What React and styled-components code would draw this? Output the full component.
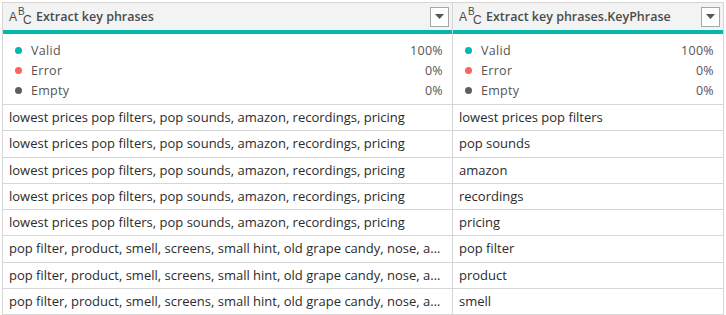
import React from 'react'
import styled, { createGlobalStyle } from 'styled-components'

const GlobalStyle = createGlobalStyle`
  html, body {
    margin: 0;
    padding: 0;
    background: #ffffff;
  }
  body {
    font-family: 'Open Sans', 'Noto Sans', sans-serif;
  }
`

const columns = [
  {
    title: 'Extract key phrases',
    width: 450,
    values: [
      'lowest prices pop filters, pop sounds, amazon, recordings, pricing',
      'lowest prices pop filters, pop sounds, amazon, recordings, pricing',
      'lowest prices pop filters, pop sounds, amazon, recordings, pricing',
      'lowest prices pop filters, pop sounds, amazon, recordings, pricing',
      'lowest prices pop filters, pop sounds, amazon, recordings, pricing',
      'pop filter, product, smell, screens, small hint, old grape candy, nose, and a plastic taste',
      'pop filter, product, smell, screens, small hint, old grape candy, nose, and a plastic taste',
      'pop filter, product, smell, screens, small hint, old grape candy, nose, and a plastic taste',
    ],
  },
  {
    title: 'Extract key phrases.KeyPhrase',
    width: 271,
    values: ['lowest prices pop filters', 'pop sounds', 'amazon', 'recordings', 'pricing', 'pop filter', 'product', 'smell'],
  },
]

const stats = [
  { label: 'Valid', color: '#01b8aa', value: '100%' },
  { label: 'Error', color: '#fd625e', value: '0%' },
  { label: 'Empty', color: '#5f5f5f', value: '0%' },
]

const App = () => {
  return (
    <>
      <GlobalStyle />
      <Wrapper>
        <Table>
          {columns.map(col => (
            <Column key={col.title} width={col.width}>
              <Header>
                <TypeIcon>
                  A<Sup>B</Sup><Sub>C</Sub>
                </TypeIcon>
                <HeaderTitle>{col.title}</HeaderTitle>
                <Dropdown>
                  <svg width="9" height="5" viewBox="0 0 9 5">
                    <path d="M0 0 L9 0 L4.5 5 Z" fill="#555" />
                  </svg>
                </Dropdown>
              </Header>
              <Stats>
                {stats.map(s => (
                  <StatRow key={s.label}>
                    <Dot color={s.color} />
                    <StatLabel>{s.label}</StatLabel>
                    <StatValue>{s.value}</StatValue>
                  </StatRow>
                ))}
              </Stats>
              {col.values.map((v, i) => (
                <Cell key={i}>{v}</Cell>
              ))}
            </Column>
          ))}
        </Table>
      </Wrapper>
    </>
  )
}

export default App

const Wrapper = styled.div`
  padding: 2px 0 0 2px;
  width: 726px;
  height: 315px;
  box-sizing: border-box;
  overflow: hidden;
`

const Table = styled.div`
  display: flex;
  border-left: 1px solid #d6d6d6;
  border-top: 1px solid #d6d6d6;
  width: max-content;
`

const Column = styled.div`
  display: flex;
  flex-direction: column;
  width: ${p => p.width}px;
  box-sizing: border-box;
  border-right: 1px solid #d6d6d6;
`

const Header = styled.div`
  display: flex;
  align-items: center;
  height: 27px;
  background: #f3f3f3;
  border-bottom: 4px solid #01b8aa;
  padding: 0 3px 0 4px;
  box-sizing: content-box;
`

const TypeIcon = styled.div`
  position: relative;
  width: 24px;
  height: 20px;
  font-family: 'Liberation Sans', sans-serif;
  font-size: 12px;
  color: #4a4a4a;
  line-height: 20px;
  padding-left: 2px;
  flex-shrink: 0;
`

const Sup = styled.span`
  position: absolute;
  left: 11px;
  top: -5px;
  font-size: 10px;
`

const Sub = styled.span`
  position: absolute;
  left: 16px;
  top: 3px;
  font-size: 12px;
`

const HeaderTitle = styled.div`
  flex: 1;
  margin-left: 3px;
  font-size: 12.5px;
  font-weight: 600;
  color: #4b4b4b;
  white-space: nowrap;
  overflow: hidden;
`

const Dropdown = styled.div`
  width: 17px;
  height: 18px;
  border: 1px solid #a6a6a6;
  background: #ffffff;
  display: grid;
  place-items: center;
  flex-shrink: 0;
`

const Stats = styled.div`
  height: 71px;
  padding: 6px 9px 0 11px;
  box-sizing: border-box;
  border-bottom: 1px solid #d6d6d6;
`

const StatRow = styled.div`
  display: flex;
  align-items: center;
  height: 20px;
  font-size: 12.5px;
  color: #555555;
`

const Dot = styled.span`
  width: 7px;
  height: 7px;
  border-radius: 50%;
  background: ${p => p.color};
  margin-right: 9px;
  margin-left: 1px;
`

const StatLabel = styled.span`
  flex: 1;
  letter-spacing: 0.3px;
`

const StatValue = styled.span`
  letter-spacing: 0.3px;
`

const Cell = styled.div`
  height: 25.25px;
  line-height: 25px;
  border-bottom: 1px solid #d6d6d6;
  padding: 0 6px;
  font-size: 13px;
  color: #2b2b2b;
  white-space: nowrap;
  overflow: hidden;
  text-overflow: ellipsis;
`
